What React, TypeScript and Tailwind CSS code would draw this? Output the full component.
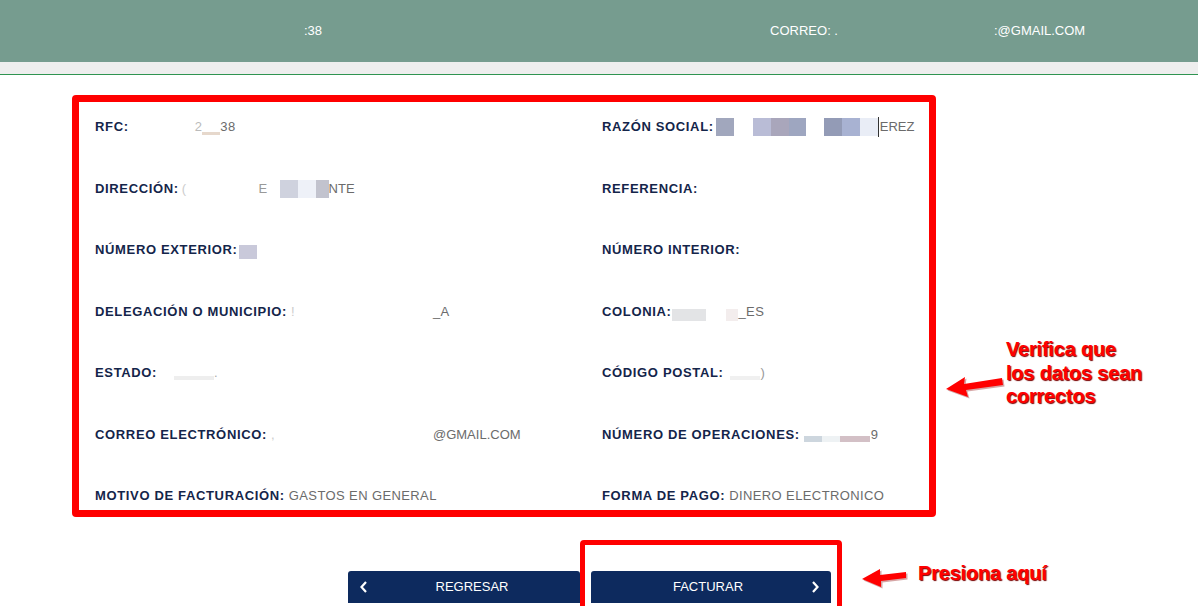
import React from "react";

const font = { fontFamily: '"Liberation Sans", Arial, sans-serif' };

const Label: React.FC<{ children: React.ReactNode }> = ({ children }) => (
  <span className="font-bold text-[13px] tracking-[0.05em] text-[#14254a]">{children}</span>
);

const Val: React.FC<{ children: React.ReactNode; className?: string }> = ({ children, className = "" }) => (
  <span className={`text-[13px] tracking-[0.03em] text-[#6b6b6b] ${className}`}>{children}</span>
);

const Row: React.FC<{ children: React.ReactNode }> = ({ children }) => (
  <div className="h-[18px] flex items-center whitespace-nowrap">{children}</div>
);

export default function App() {
  return (
    <div className="relative w-[1198px] h-[606px] overflow-hidden bg-white" style={font}>
      {/* Header */}
      <div className="h-[62px] bg-[#769c8f] flex items-center text-white text-[13px]">
        <span className="ml-[304px]">:38</span>
        <span className="ml-[448px]">CORREO: .</span>
        <span className="ml-[156px]">:@GMAIL.COM</span>
      </div>
      <div className="h-[12px] bg-[#eeeeee]" />
      <div className="h-px bg-[#2f9451]" />

      {/* Data box */}
      <div className="ml-[72px] mt-[20px] w-[864px] border-[7px] border-[#ff0000] rounded-[4px]">
        <div className="grid grid-cols-[507px_1fr] gap-y-[43.5px] pl-[16px] pt-[16px] pb-[5px]">
          <Row>
            <Label>RFC:</Label>
            <Val className="ml-[66px] text-[#bbb]">2</Val>
            <span className="inline-block w-[18px] h-[3px] bg-[#e6d8cc] self-end mb-[1px]" />
            <Val>38</Val>
          </Row>
          <Row>
            <Label>RAZÓN SOCIAL:</Label>
            <span className="inline-block ml-[2px] w-[18px] h-[18px] bg-[#a1a7bd]" />
            <span className="inline-block ml-[19px] w-[18px] h-[18px] bg-[#b9bcd6]" />
            <span className="inline-block w-[18px] h-[18px] bg-[#a9a6bb]" />
            <span className="inline-block w-[17px] h-[18px] bg-[#9ea6c0]" />
            <span className="inline-block ml-[18px] w-[18px] h-[18px] bg-[#939bb6]" />
            <span className="inline-block w-[18px] h-[18px] bg-[#a8b2d2]" />
            <span className="inline-block w-[18px] h-[18px] bg-[#e9edf6]" />
            <Val className="border-l border-[#333] pl-px tracking-normal">EREZ</Val>
          </Row>

          <Row>
            <Label>DIRECCIÓN:</Label>
            <Val className="ml-[3px] text-[#ccc]">(</Val>
            <Val className="ml-[72px] text-[#999]">E</Val>
            <span className="inline-block ml-[12px] w-[18px] h-[18px] bg-[#cfd2de]" />
            <span className="inline-block w-[18px] h-[18px] bg-[#eef1f8]" />
            <span className="inline-block w-[13px] h-[18px] bg-[#c2c3ce]" />
            <Val className="tracking-normal">NTE</Val>
          </Row>
          <Row>
            <Label>REFERENCIA:</Label>
          </Row>

          <Row>
            <Label>NÚMERO EXTERIOR:</Label>
            <span className="inline-block ml-[1px] w-[18px] h-[14px] mt-[4px] bg-[#c9c9da]" />
          </Row>
          <Row>
            <Label>NÚMERO INTERIOR:</Label>
          </Row>

          <Row>
            <Label>DELEGACIÓN O MUNICIPIO:</Label>
            <Val className="ml-[4px] text-[#ccc]">!</Val>
            <Val className="ml-[138px]">_A</Val>
          </Row>
          <Row>
            <Label>COLONIA:</Label>
            <span className="inline-block ml-[1px] w-[34px] h-[12px] mt-[6px] bg-[#e3e4e6]" />
            <span className="inline-block ml-[20px] w-[12px] h-[12px] mt-[6px] bg-[#f3eded]" />
            <Val>_ES</Val>
          </Row>

          <Row>
            <Label>ESTADO:</Label>
            <span className="inline-block ml-[17px] w-[40px] h-[4px] mt-[10px] bg-[#eeeeee]" />
            <Val className="text-[#aaa]">.</Val>
          </Row>
          <Row>
            <Label>CÓDIGO POSTAL:</Label>
            <span className="inline-block ml-[6px] w-[30px] h-[4px] mt-[10px] bg-[#f0f0f0]" />
            <Val className="ml-[1px] text-[#999]">)</Val>
          </Row>

          <Row>
            <Label>CORREO ELECTRÓNICO:</Label>
            <Val className="ml-[4px] text-[#ccc]">,</Val>
            <Val className="ml-[158px] tracking-normal">@GMAIL.COM</Val>
          </Row>
          <Row>
            <Label>NÚMERO DE OPERACIONES:</Label>
            <span className="inline-block ml-[4px] w-[18px] h-[6px] mt-[8px] bg-[#cdd6de]" />
            <span className="inline-block w-[18px] h-[6px] mt-[8px] bg-[#eef2f4]" />
            <span className="inline-block w-[30px] h-[6px] mt-[8px] bg-[#d3c0c6]" />
            <Val className="ml-[1px]">9</Val>
          </Row>

          <Row>
            <Label>MOTIVO DE FACTURACIÓN:</Label>
            <Val className="ml-[4px]">GASTOS EN GENERAL</Val>
          </Row>
          <Row>
            <Label>FORMA DE PAGO:</Label>
            <Val className="ml-[4px]">DINERO ELECTRONICO</Val>
          </Row>
        </div>
      </div>

      {/* Buttons */}
      <div className="ml-[348px] mt-[23px] flex items-start">
        <button className="mt-[31px] w-[232px] h-[32px] bg-[#0d2a5e] rounded-t-[3px] text-white text-[13px] flex items-center px-[10px]">
          <svg width="12" height="14" viewBox="0 0 12 14" className="shrink-0">
            <path d="M8 2 L3.5 7 L8 12" stroke="white" strokeWidth="2.2" fill="none" />
          </svg>
          <span className="flex-1 text-center pl-[4px]">REGRESAR</span>
        </button>
        <div className="border-[5px] border-[#ff0000] rounded-t-[4px] px-[6px] pt-[26px] pb-[10px]">
          <button className="w-[240px] h-[32px] bg-[#0d2a5e] rounded-t-[3px] text-white text-[13px] flex items-center px-[10px]">
            <span className="flex-1 text-center pl-[6px]">FACTURAR</span>
            <svg width="12" height="14" viewBox="0 0 12 14" className="shrink-0">
              <path d="M4 2 L8.5 7 L4 12" stroke="white" strokeWidth="2.2" fill="none" />
            </svg>
          </button>
        </div>
      </div>

      {/* Annotation: verify */}
      <svg className="absolute left-[940px] top-[365px]" width="70" height="40" viewBox="0 0 70 40">
        <path d="M62 13 L24 19 L25 12 L6 24 L28 32 L26 25 L63 20 Z" fill="#8a0000" opacity="0.35" transform="translate(1.5,1.5)" />
        <path d="M62 13 L24 19 L25 12 L6 24 L28 32 L26 25 L63 20 Z" fill="#ff0000" />
      </svg>
      <div
        className="absolute left-[1006px] top-[338px] text-[20px] leading-[23.5px] font-bold text-[#ff0000] tracking-[-0.01em]"
        style={{ textShadow: "1px 1px 1px #7a0000" }}
      >
        Verifica que
        <br />
        los datos sean
        <br />
        correctos
      </div>

      {/* Annotation: press */}
      <svg className="absolute left-[858px] top-[565px]" width="52" height="26" viewBox="0 0 52 26">
        <path d="M48 7 L22 10 L22 4 L4 14 L23 22 L23 16 L48 13 Z" fill="#8a0000" opacity="0.35" transform="translate(1.5,1.5)" />
        <path d="M48 7 L22 10 L22 4 L4 14 L23 22 L23 16 L48 13 Z" fill="#ff0000" />
      </svg>
      <div
        className="absolute left-[918px] top-[561px] text-[20px] leading-[24px] font-bold text-[#ff0000] tracking-[-0.01em]"
        style={{ textShadow: "1px 1px 1px #7a0000" }}
      >
        Presiona aquí
      </div>
    </div>
  );
}
